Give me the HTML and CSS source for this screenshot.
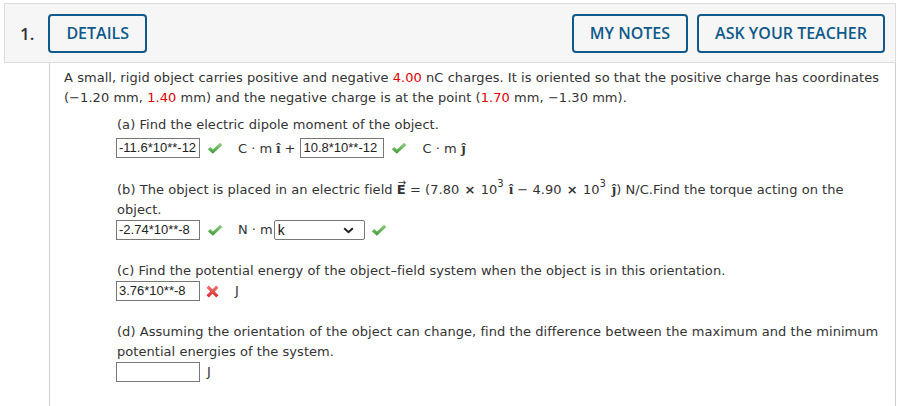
FILE: index.html
```html
<!DOCTYPE html>
<html>
<head>
<meta charset="utf-8">
<link rel="stylesheet" href="styles.css">
</head>
<body>
<div class="question">
  <div class="header">
    <span class="num">1.</span>
    <button class="btn">DETAILS</button>
    <span class="spacer"></span>
    <button class="btn">MY NOTES</button>
    <button class="btn btn-gap">ASK YOUR TEACHER</button>
  </div>
  <div class="body">
    <p class="intro">A small, rigid object carries positive and negative <span class="red">4.00</span> nC charges. It is oriented so that the positive charge has coordinates (−1.20 mm, <span class="red">1.40</span> mm) and the negative charge is at the point (<span class="red">1.70</span> mm, −1.30 mm).</p>

    <div class="part part-a">
      <p class="q">(a) Find the electric dipole moment of the object.</p>
      <div class="row row-a">
        <span class="box">-11.6*10**-12</span>
        <svg class="ok" width="16" height="13" viewBox="0 0 16 13"><defs><linearGradient id="g1" x1="0" y1="0" x2="0" y2="1"><stop offset="0" stop-color="#8fd07c"/><stop offset="1" stop-color="#3f9a3a"/></linearGradient></defs><path d="M0.8 7.2 L3.3 5 L5.9 7.6 L13.2 0.8 L15.3 2.9 L5.9 11.8 Z" fill="url(#g1)"/></svg>
        <span class="unit">C · m <b class="vec">î</b> +</span>
        <span class="box">10.8*10**-12</span>
        <svg class="ok" width="16" height="13" viewBox="0 0 16 13"><path d="M0.8 7.2 L3.3 5 L5.9 7.6 L13.2 0.8 L15.3 2.9 L5.9 11.8 Z" fill="url(#g1)"/></svg>
        <span class="unit">C · m <b class="vec">ĵ</b></span>
      </div>
    </div>

    <div class="part part-b">
      <p class="q">(b) The object is placed in an electric field <b class="evec">E</b> = (7.80 <b class="x">×</b> 10<sup>3</sup> <b class="vec">î</b> − 4.90 <b class="x">×</b> 10<sup>3</sup> <b class="vec">ĵ</b>) N/C.Find the torque acting on the object.</p>
      <div class="row">
        <span class="box">-2.74*10**-8</span>
        <svg class="ok" width="16" height="13" viewBox="0 0 16 13"><path d="M0.8 7.2 L3.3 5 L5.9 7.6 L13.2 0.8 L15.3 2.9 L5.9 11.8 Z" fill="url(#g1)"/></svg>
        <span class="unit unit-nm">N · m</span>
        <span class="select"><span class="sel-val">k</span><svg class="chev" width="11" height="7" viewBox="0 0 11 7"><path d="M1.2 1.2 L5.5 5.2 L9.8 1.2" fill="none" stroke="#222" stroke-width="2"/></svg></span>
        <svg class="ok ok-sel" width="16" height="13" viewBox="0 0 16 13"><path d="M0.8 7.2 L3.3 5 L5.9 7.6 L13.2 0.8 L15.3 2.9 L5.9 11.8 Z" fill="url(#g1)"/></svg>
      </div>
    </div>

    <div class="part part-c">
      <p class="q">(c) Find the potential energy of the object–field system when the object is in this orientation.</p>
      <div class="row">
        <span class="box">3.76*10**-8</span>
        <svg class="bad" width="15" height="15" viewBox="0 0 15 15"><defs><linearGradient id="g2" x1="0" y1="0" x2="0" y2="1"><stop offset="0" stop-color="#f07a7a"/><stop offset="1" stop-color="#d92b2b"/></linearGradient></defs><path d="M1.5 3.8 L3.8 1.5 L7.5 5.2 L11.2 1.5 L13.5 3.8 L9.8 7.5 L13.5 11.2 L11.2 13.5 L7.5 9.8 L3.8 13.5 L1.5 11.2 L5.2 7.5 Z" fill="url(#g2)"/></svg>
        <span class="unit unit-j">J</span>
      </div>
    </div>

    <div class="part part-d">
      <p class="q">(d) Assuming the orientation of the object can change, find the difference between the maximum and the minimum potential energies of the system.</p>
      <div class="row">
        <span class="box"></span>
        <span class="unit unit-j2">J</span>
      </div>
    </div>
  </div>
</div>
</body>
</html>
```

FILE: styles.css
```css
* { box-sizing: border-box; }

body {
  margin: 0;
  background: #fff;
  color: #333;
  font-family: "DejaVu Sans", Verdana, sans-serif;
}

.question {
  margin: 3px 0 0 4px;
  width: 892px;
}

.header {
  display: flex;
  align-items: center;
  height: 60px;
  background: #f6f6f6;
  border: 1px solid #dcdcdc;
  padding: 0 10px 0 15px;
}

.num {
  font-family: "Open Sans", sans-serif;
  font-weight: 600;
  font-size: 17px;
  color: #333;
  margin-right: 14px;
}

.btn {
  font-family: "Open Sans", sans-serif;
  font-weight: 600;
  font-size: 16px;
  color: #0f5a8a;
  background: transparent;
  border: 2px solid #0f5a8a;
  border-radius: 4px;
  height: 39px;
  padding: 0 16px;
  margin: 0;
}

.btn-gap { margin-left: 9px; }

.spacer { flex: 1; }

.body {
  margin-left: 45px;
  border-left: 1px solid #cfcfcf;
  border-right: 1px solid #cfcfcf;
  padding: 5px 14px 40px 14px;
  font-size: 13px;
  line-height: 20px;
  letter-spacing: 0.05px;
  min-height: 346px;
}

.body p { margin: 0; }

.red { color: #e00000; }

.part { margin-left: 53px; }
.part-a { margin-top: 7px; }
.part-b { margin-top: 21px; }
.part-c { margin-top: 21px; }
.part-d { margin-top: 21px; }

.part-b .q { padding-right: 30px; }

.row {
  display: flex;
  align-items: center;
  height: 20px;
  margin-left: -1px;
  letter-spacing: 0;
}
.row-a { margin-top: 3px; }

.box {
  display: inline-block;
  width: 84px;
  height: 20px;
  border: 1px solid #777;
  font-family: "Liberation Sans", Arial, sans-serif;
  font-size: 13px;
  line-height: 18px;
  padding-left: 2px;
  color: #222;
  background: #fff;
}

.ok { margin-left: 7px; }
.ok-sel { margin-left: 6px; }
.bad { margin-left: 5px; }

.unit {
  margin-left: 15px;
  margin-right: 5px;
  white-space: pre;
}
.unit-nm { margin-right: 1px; }
.unit-j { margin-left: 15px; }
.unit-j2 { margin-left: 7px; }

.vec {
  font-family: "Liberation Serif", "Times New Roman", serif;
  font-weight: bold;
  font-size: 15px;
}

.x {
  font-weight: bold;
  margin: 0 1px;
}

.evec {
  position: relative;
  font-weight: bold;
}
.evec::before {
  content: "→";
  position: absolute;
  left: 1px;
  top: -9px;
  font-size: 10px;
  font-weight: normal;
}

sup {
  font-size: 10px;
  line-height: 0;
  vertical-align: 7px;
  margin-right: 1px;
}

.select {
  display: inline-flex;
  align-items: center;
  justify-content: space-between;
  width: 91px;
  height: 20px;
  border: 1px solid #777;
  border-radius: 2px;
  padding: 0 10px 0 3px;
  background: #fff;
  font-family: "Liberation Sans", Arial, sans-serif;
  font-size: 14px;
  color: #111;
}
```
